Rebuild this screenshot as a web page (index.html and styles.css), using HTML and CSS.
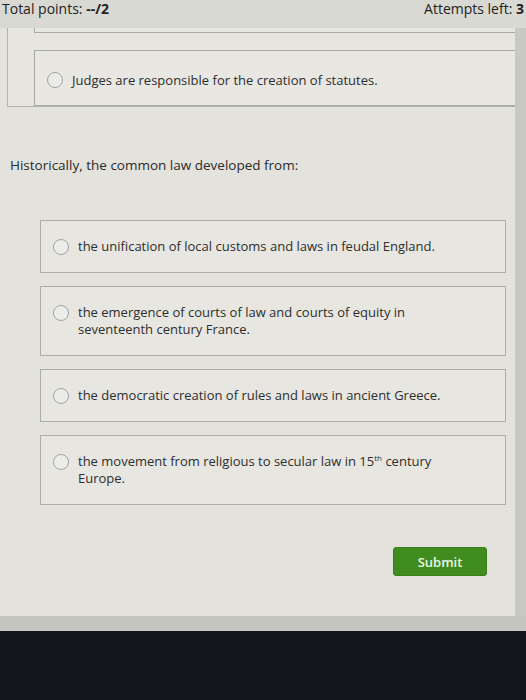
FILE: index.html
```html
<!DOCTYPE html>
<html>
<head>
<meta charset="utf-8">
<link rel="stylesheet" href="styles.css">
</head>
<body>
<div class="topbar">
  <span>Total points: <b>--/2</b></span>
  <span>Attempts left: <b>3</b></span>
</div>
<div class="panel">
  <div class="prev-card">
    <div class="prev-line"></div>
    <div class="prev-option">
      <span class="radio"></span>
      <span class="label">Judges are responsible for the creation of statutes.</span>
    </div>
  </div>
  <p class="question">Historically, the common law developed from:</p>
  <div class="options">
    <div class="option">
      <span class="radio"></span>
      <span class="label">the unification of local customs and laws in feudal England.</span>
    </div>
    <div class="option">
      <span class="radio"></span>
      <span class="label">the emergence of courts of law and courts of equity in<br>seventeenth century France.</span>
    </div>
    <div class="option">
      <span class="radio"></span>
      <span class="label">the democratic creation of rules and laws in ancient Greece.</span>
    </div>
    <div class="option">
      <span class="radio"></span>
      <span class="label">the movement from religious to secular law in 15<sup>th</sup> century<br>Europe.</span>
    </div>
  </div>
  <div class="actions">
    <button class="submit">Submit</button>
  </div>
</div>
<div class="strip"></div>
<div class="footer"></div>
</body>
</html>
```

FILE: styles.css
```css
html, body {
  margin: 0;
  padding: 0;
}
body {
  background: #c9c9c4;
  font-family: "Open Sans", "Liberation Sans", sans-serif;
  color: #2e2e2e;
  width: 526px;
  height: 700px;
  overflow: hidden;
}
.topbar {
  height: 28px;
  box-sizing: border-box;
  background: #d9d9d3;
  display: flex;
  justify-content: space-between;
  padding: 0 2px 0 2px;
  font-size: 14px;
  line-height: 18px;
  color: #222;
}
.topbar b {
  font-weight: 700;
}
.panel {
  width: 515px;
  background: #e3e2dd;
  padding-bottom: 40px;
  overflow: hidden;
}
.prev-card {
  margin-left: 7px;
  width: 513px;
  height: 79px;
  box-sizing: border-box;
  border: 1px solid #b4b4ae;
  border-top: none;
  background: #e6e5e0;
  display: flex;
  flex-direction: column;
}
.prev-line {
  margin-left: 26px;
  height: 4px;
  border-left: 1px solid #a9a9a3;
  border-bottom: 1px solid #a9a9a3;
}
.prev-option {
  margin-top: 17px;
  margin-left: 26px;
  width: 483px;
  height: 56px;
  box-sizing: border-box;
  border: 1px solid #a9a9a3;
  background: #e8e7e2;
  display: flex;
  align-items: center;
  padding: 3px 12px 0 12px;
  font-size: 13px;
}
.radio {
  flex: none;
  width: 14px;
  height: 14px;
  border-radius: 50%;
  border: 1px solid #a3a3a0;
  background: #ececea;
  margin-right: 9px;
}
.question {
  margin: 48px 0 0 0;
  padding-left: 10px;
  font-size: 13.5px;
  line-height: 20px;
  color: #2b2b2b;
}
.options {
  margin-top: 45px;
  margin-left: 40px;
  width: 466px;
  display: flex;
  flex-direction: column;
  gap: 13px;
}
.option {
  box-sizing: border-box;
  border: 1px solid #adada7;
  background: #e7e6e1;
  display: flex;
  align-items: flex-start;
  padding: 17px 12px 17px 12px;
  font-size: 13px;
  line-height: 17px;
}
.option .radio {
  margin-top: 1px;
}
.label sup {
  font-size: 8px;
  line-height: 0;
  vertical-align: 5px;
}
.actions {
  margin-top: 42px;
  display: flex;
  justify-content: flex-end;
  padding-right: 28px;
}
.submit {
  width: 94px;
  height: 29px;
  border: 1px solid #3a7f1c;
  border-radius: 3px;
  background: #408c1f;
  color: #eef5e8;
  font-family: "Open Sans", "Liberation Sans", sans-serif;
  font-size: 13px;
  font-weight: 600;
  padding: 0;
}
.strip {
  height: 15px;
  background: #c6c6c1;
}
.footer {
  height: 78px;
  background: #16161f;
}
```
